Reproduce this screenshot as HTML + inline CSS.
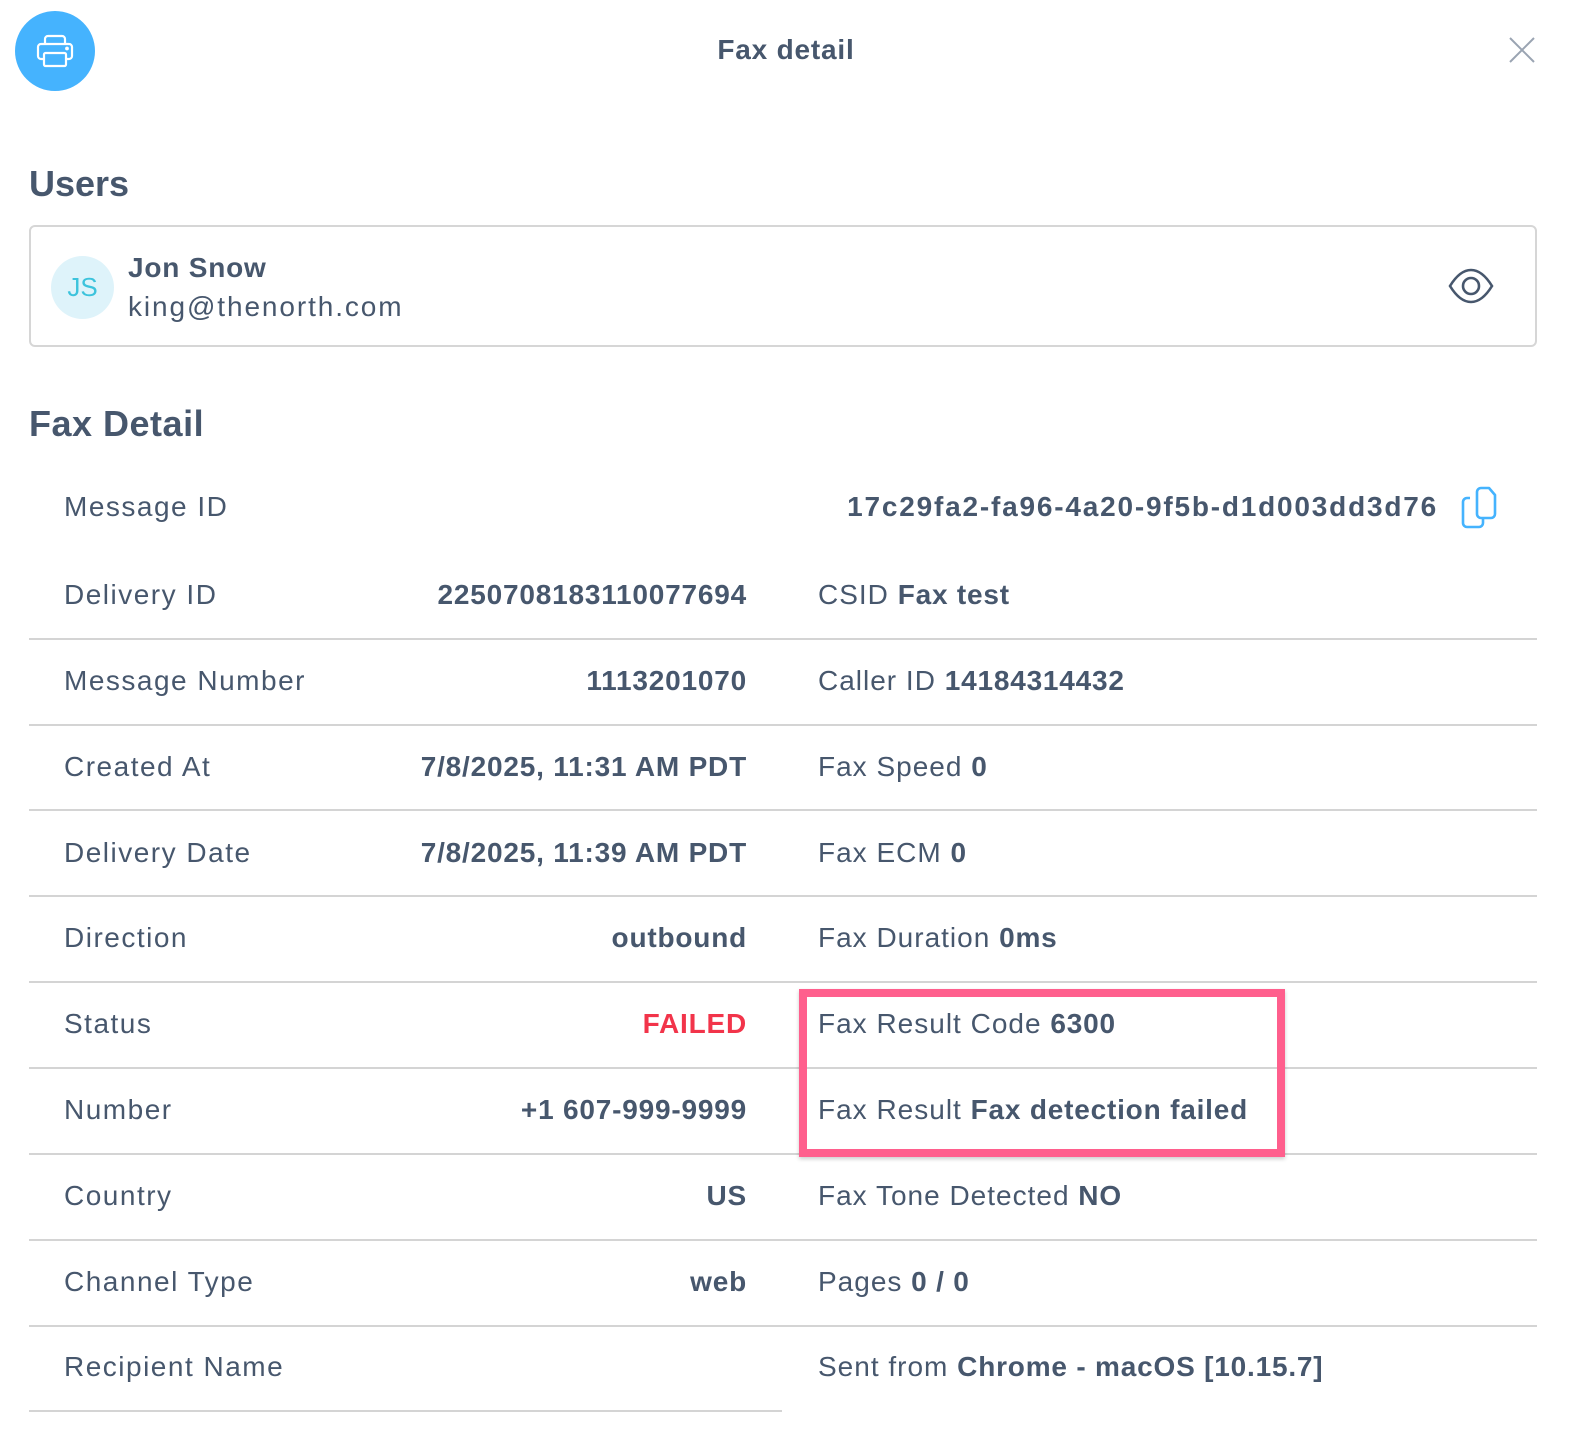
<!DOCTYPE html>
<html><head><meta charset="utf-8"><style>
*{margin:0;padding:0;box-sizing:border-box}
body{width:1572px;height:1434px;background:#fff;font-family:"Liberation Sans",sans-serif;color:#47576d;position:relative;overflow:hidden}
.a{position:absolute;white-space:nowrap}
.lbl{font-size:28px;line-height:40px;left:64px;letter-spacing:1.5px}
.val{font-size:28px;line-height:40px;font-weight:bold;right:825px;text-align:right;letter-spacing:0.8px}
.r{font-size:28px;line-height:40px;left:818px;letter-spacing:1px}
.r b{font-weight:bold;letter-spacing:0.8px}
.hr{position:absolute;height:2px;background:#d4d4d4;left:29px;width:1508px}
</style></head><body>
<div class="a" style="left:15px;top:11px;width:80px;height:80px;border-radius:50%;background:#45b3fe"></div>
<svg class="a" style="left:35px;top:31px" width="40" height="40" viewBox="0 0 40 40" fill="none" stroke="#fff" stroke-width="2.2" stroke-linejoin="round">
<path d="M10 13 V8 a3 3 0 0 1 3-3 h14 a3 3 0 0 1 3 3 V13"/>
<path d="M8 28 H6 a3 3 0 0 1-3-3 V16 a3 3 0 0 1 3-3 h28 a3 3 0 0 1 3 3 v9 a3 3 0 0 1-3 3 h-2"/>
<rect x="9" y="22" width="22" height="13" rx="1.5"/>
<circle cx="32" cy="17.5" r="0.8" fill="#fff"/>
</svg>
<div class="a" style="left:0;width:1572px;top:32px;text-align:center;font-size:28px;font-weight:bold;line-height:36px;letter-spacing:0.8px">Fax detail</div>
<svg class="a" style="left:1508px;top:36px" width="28" height="28" viewBox="0 0 28 28" stroke="#9aa4b2" stroke-width="2"><path d="M2 2 L26 26 M26 2 L2 26"/></svg>

<div class="a" style="left:29px;top:162px;font-size:36px;font-weight:bold;line-height:44px">Users</div>
<div class="a" style="left:29px;top:225px;width:1508px;height:122px;border:2px solid #d6d6d6;border-radius:6px"></div>
<div class="a" style="left:51px;top:256px;width:63px;height:63px;border-radius:50%;background:#def3fa;color:#3cc3dc;font-size:26px;line-height:63px;text-align:center">JS</div>
<div class="a" style="left:128px;top:250px;font-size:28px;font-weight:bold;line-height:36px;letter-spacing:0.8px">Jon Snow</div>
<div class="a" style="left:128px;top:289px;font-size:28px;line-height:36px;letter-spacing:1.9px">king@thenorth.com</div>
<svg class="a" style="left:1448px;top:267px" width="46" height="38" viewBox="0 0 46 38" fill="none" stroke="#47576d" stroke-width="2.6"><path d="M2 19 C10 6 17 3 23 3 C29 3 36 6 44 19 C36 32 29 35 23 35 C17 35 10 32 2 19Z"/><circle cx="23" cy="19" r="8"/></svg>

<div class="a" style="left:29px;top:402px;font-size:36px;font-weight:bold;line-height:44px;letter-spacing:0.5px">Fax Detail</div>

<div class="a lbl" style="top:487px">Message ID</div>
<div class="a" style="top:487px;right:134px;font-size:28px;line-height:40px;font-weight:bold;letter-spacing:1.8px">17c29fa2-fa96-4a20-9f5b-d1d003dd3d76</div>
<svg class="a" style="left:1458px;top:485px" width="40" height="44" viewBox="0 0 40 44" fill="none" stroke="#45b3fe" stroke-width="2.6" stroke-linejoin="round">
<path d="M12 13 H9 a4 4 0 0 0-4 4 V38 a4 4 0 0 0 4 4 h12 a4 4 0 0 0 4-4 v-4"/>
<path d="M19 7 a4 4 0 0 1 4-4 h8 l6 7 V29 a4 4 0 0 1-4 4 h-10 a4 4 0 0 1-4-4 Z"/>
</svg>

<div class="a lbl" style="top:575px">Delivery ID</div><div class="a val" style="top:575px">2250708183110077694</div><div class="a r" style="top:575px">CSID <b>Fax test</b></div>
<div class="hr" style="top:638px"></div>
<div class="a lbl" style="top:661px">Message Number</div><div class="a val" style="top:661px">1113201070</div><div class="a r" style="top:661px">Caller ID <b>14184314432</b></div>
<div class="hr" style="top:724px"></div>
<div class="a lbl" style="top:747px">Created At</div><div class="a val" style="top:747px">7/8/2025, 11:31 AM PDT</div><div class="a r" style="top:747px">Fax Speed <b>0</b></div>
<div class="hr" style="top:809px"></div>
<div class="a lbl" style="top:833px">Delivery Date</div><div class="a val" style="top:833px">7/8/2025, 11:39 AM PDT</div><div class="a r" style="top:833px">Fax ECM <b>0</b></div>
<div class="hr" style="top:895px"></div>
<div class="a lbl" style="top:918px">Direction</div><div class="a val" style="top:918px">outbound</div><div class="a r" style="top:918px">Fax Duration <b>0ms</b></div>
<div class="hr" style="top:981px"></div>
<div class="a lbl" style="top:1004px">Status</div><div class="a val" style="top:1004px;color:#f2344a">FAILED</div><div class="a r" style="top:1004px">Fax Result Code <b>6300</b></div>
<div class="hr" style="top:1067px"></div>
<div class="a lbl" style="top:1090px">Number</div><div class="a val" style="top:1090px">+1 607-999-9999</div><div class="a r" style="top:1090px">Fax Result <b>Fax detection failed</b></div>
<div class="hr" style="top:1153px"></div>
<div class="a lbl" style="top:1176px">Country</div><div class="a val" style="top:1176px">US</div><div class="a r" style="top:1176px">Fax Tone Detected <b>NO</b></div>
<div class="hr" style="top:1239px"></div>
<div class="a lbl" style="top:1262px">Channel Type</div><div class="a val" style="top:1262px">web</div><div class="a r" style="top:1262px">Pages <b>0 / 0</b></div>
<div class="hr" style="top:1325px"></div>
<div class="a lbl" style="top:1347px">Recipient Name</div><div class="a r" style="top:1347px">Sent from <b>Chrome - macOS [10.15.7]</b></div>
<div class="hr" style="top:1410px;width:753px"></div>

<div class="a" style="left:799px;top:989px;width:486px;height:168px;border:8px solid #ff5f8d;box-shadow:0 2px 4px rgba(0,0,0,.2)"></div>
</body></html>
